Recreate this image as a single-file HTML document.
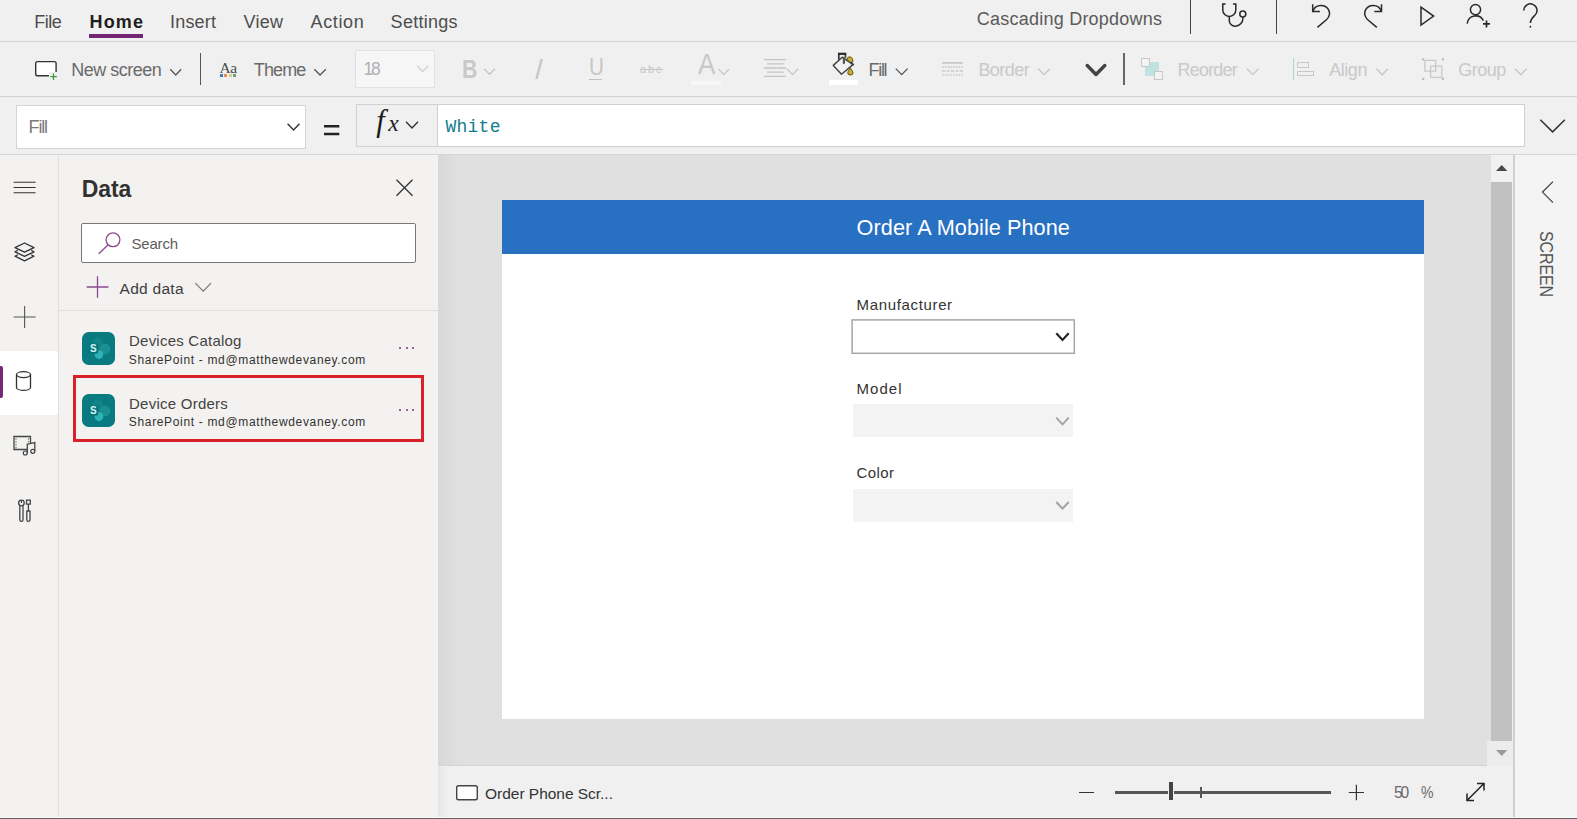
<!DOCTYPE html>
<html><head><meta charset="utf-8"><title>Cascading Dropdowns</title>
<style>
*{box-sizing:border-box;margin:0;padding:0}
html,body{width:1577px;height:819px;overflow:hidden;background:#f0f0f0;font-family:"Liberation Sans",sans-serif;}
.a{position:absolute;white-space:nowrap}
svg{position:absolute;overflow:visible}
#menubar{left:0;top:0;width:1577px;height:42px;background:#f0f0f0;border-bottom:1px solid #d2d2d2}
#toolbar{left:0;top:42px;width:1577px;height:55px;background:#f0f0f0;border-bottom:1px solid #d2d2d2}
#fbar{left:0;top:97px;width:1577px;height:58px;background:#f0f0f0;border-bottom:1px solid #d6d6d6}
.menu{top:10px;font-size:18px;color:#4a4a4a;line-height:22px}
.tb{top:59px;font-size:18px;color:#666;line-height:22px}
.dis{color:#c2c2c2}
#rail{left:0;top:155px;width:59px;height:662px;background:#f3f2f1;border-right:1px solid #e1dfdd}
#panel{left:59px;top:155px;width:379px;height:662px;background:#f3f2f1}
#canvas{left:438px;top:155px;width:1053px;height:610px;background:#e0e0e0}
#vscroll{left:1491px;top:155px;width:21.3px;height:610px;background:#c1c1c1}
#right{left:1512.6px;top:155px;width:64.4px;height:662px;background:#f4f4f4;border-left:2px solid #d0d0d0}
#bbar{left:438px;top:765px;width:1075px;height:52px;background:#f0f0f0;border-top:1px solid #d4d4d4}
#bottomline{left:0;top:817px;width:1577px;height:2px;background:#606060;border-top:1px solid #fafafa}
</style></head><body>
<div class="a" id="menubar"></div>
<div class="a" id="toolbar"></div>
<div class="a" id="fbar"></div>
<div class="a" id="rail"></div>
<div class="a" id="panel"></div>
<div class="a" id="canvas"></div>
<div class="a" id="vscroll"></div>
<div class="a" id="right"></div>
<div class="a" id="bbar"></div>
<div class="a" id="bottomline"></div>

<div class="a" style="left:354.5px;top:49.5px;width:80px;height:38.5px;background:#f6f6f6;border:1px solid #e2e2e2"></div>
<div class="a" style="left:691px;top:80.5px;width:30px;height:4px;background:#f8f8f8"></div>
<div class="a" style="left:829px;top:80px;width:29px;height:5px;background:#fff"></div>
<div class="a" style="left:16px;top:104.5px;width:290px;height:44px;background:#fff;border:1px solid #d4d4d4"></div>
<div class="a" style="left:356px;top:104px;width:81.5px;height:43px;background:#f0f0f0;border:1px solid #d0d0d0"></div>
<div class="a" style="left:437px;top:104px;width:1088px;height:43px;background:#fff;border:1px solid #d0d0d0"></div>
<div class="a" style="left:0;top:350.5px;width:57.5px;height:64px;background:#fff;border-radius:0 3px 3px 0"></div>
<div class="a" style="left:0;top:365.5px;width:3px;height:32.5px;background:#742774;border-radius:0 2px 2px 0"></div>
<div class="a" style="left:81px;top:223px;width:335.3px;height:40px;background:#fff;border:1px solid #7a7876;border-radius:2px"></div>
<div class="a" style="left:59px;top:310px;width:379px;height:1px;background:#e1dfdd"></div>
<div class="a" style="left:73px;top:375px;width:351px;height:67px;border:3px solid #d9212b"></div>
<div class="a" style="left:438px;top:155px;width:22px;height:610px;background:linear-gradient(90deg,#d8d8d8,#e0e0e0)"></div>
<div class="a" style="left:502px;top:200px;width:922px;height:519px;background:#fff"></div>
<div class="a" style="left:502px;top:200px;width:922px;height:54px;background:#2870c2"></div>
<svg class="a" style="left:0;top:0" width="1" height="1"><rect x="852.1" y="319.9" width="222.2" height="33.4" fill="#fff" stroke="#a6a6a6" stroke-width="1.5"/></svg>
<div class="a" style="left:852.7px;top:404px;width:220.3px;height:33px;background:#f3f3f3"></div>
<div class="a" style="left:852.7px;top:489px;width:220.3px;height:33px;background:#f3f3f3"></div>
<div class="a" style="left:1491px;top:155px;width:22px;height:27px;background:#f1f1f1"></div>
<div class="a" style="left:1487px;top:741px;width:26px;height:25px;background:#ececec"></div>
<svg class="a" style="left:0;top:0" width="1" height="1"><rect x="456.7" y="785.7" width="20.6" height="14" rx="1.8" fill="#fff" stroke="#444" stroke-width="1.4"/></svg>

<div class="a" style="left:34.3px;top:12.8px;font:normal 400 18px/18px 'Liberation Sans',sans-serif;color:#4d4d4d;letter-spacing:-0.54px;">File</div>
<div class="a" style="left:89.6px;top:12.8px;font:normal 700 18px/18px 'Liberation Sans',sans-serif;color:#1f1f1f;letter-spacing:1.13px;">Home</div>
<div class="a" style="left:170.0px;top:12.8px;font:normal 400 18px/18px 'Liberation Sans',sans-serif;color:#4d4d4d;letter-spacing:0.19px;">Insert</div>
<div class="a" style="left:243.6px;top:12.8px;font:normal 400 18px/18px 'Liberation Sans',sans-serif;color:#4d4d4d;letter-spacing:0.23px;">View</div>
<div class="a" style="left:310.6px;top:12.8px;font:normal 400 18px/18px 'Liberation Sans',sans-serif;color:#4d4d4d;letter-spacing:0.61px;">Action</div>
<div class="a" style="left:390.6px;top:12.8px;font:normal 400 18px/18px 'Liberation Sans',sans-serif;color:#4d4d4d;letter-spacing:0.28px;">Settings</div>
<div class="a" style="left:976.7px;top:9.5px;font:normal 400 18px/18px 'Liberation Sans',sans-serif;color:#5a5a5a;letter-spacing:0.24px;">Cascading Dropdowns</div>
<div class="a" style="left:71.3px;top:60.9px;font:normal 400 18px/18px 'Liberation Sans',sans-serif;color:#6a6a6a;letter-spacing:-0.52px;">New screen</div>
<div class="a" style="left:253.8px;top:60.9px;font:normal 400 18px/18px 'Liberation Sans',sans-serif;color:#6a6a6a;letter-spacing:-0.88px;">Theme</div>
<div class="a" style="left:363.5px;top:61.3px;font:normal 400 17.5px/17.5px 'Liberation Sans',sans-serif;color:#b0b0b0;letter-spacing:-2.27px;">18</div>
<div class="a" style="left:462.0px;top:56.0px;font:normal 700 26px/26px 'Liberation Sans',sans-serif;color:#c9c9c9;letter-spacing:-3.78px;transform:scaleX(0.82);transform-origin:0 0">B</div>
<div class="a" style="left:535.3px;top:57.4px;font:normal 400 27px/27px 'Liberation Sans',sans-serif;color:#c4c4c4;letter-spacing:1.18px;">/</div>
<div class="a" style="left:589.0px;top:55.4px;font:normal 400 24px/24px 'Liberation Sans',sans-serif;color:#c6c6c6;letter-spacing:-4.04px;transform:scaleX(0.86);transform-origin:0 0">U</div>
<div class="a" style="left:640.0px;top:64.0px;font:normal 400 11px/11px 'Liberation Sans',sans-serif;color:#c6c6c6;letter-spacing:1.82px;text-decoration:line-through">abc</div>
<div class="a" style="left:697.5px;top:49.8px;font:normal 400 29px/29px 'Liberation Sans',sans-serif;color:#c8c8c8;letter-spacing:-2.14px;transform:scaleX(0.9);transform-origin:0 0">A</div>
<div class="a" style="left:868.5px;top:60.9px;font:normal 400 18px/18px 'Liberation Sans',sans-serif;color:#6a6a6a;letter-spacing:-1.30px;">Fill</div>
<div class="a" style="left:978.4px;top:60.9px;font:normal 400 18px/18px 'Liberation Sans',sans-serif;color:#c9c9c9;letter-spacing:-0.55px;">Border</div>
<div class="a" style="left:1177.4px;top:60.9px;font:normal 400 18px/18px 'Liberation Sans',sans-serif;color:#c9c9c9;letter-spacing:-0.76px;">Reorder</div>
<div class="a" style="left:1329.3px;top:60.9px;font:normal 400 18px/18px 'Liberation Sans',sans-serif;color:#c9c9c9;letter-spacing:-0.48px;">Align</div>
<div class="a" style="left:1458.2px;top:60.9px;font:normal 400 18px/18px 'Liberation Sans',sans-serif;color:#c9c9c9;letter-spacing:-0.46px;">Group</div>
<div class="a" style="left:28.6px;top:118.0px;font:normal 400 18px/18px 'Liberation Sans',sans-serif;color:#7a7a7a;letter-spacing:-1.17px;">Fill</div>
<div class="a" style="left:445.4px;top:118.0px;font:normal 400 18px/18px 'Liberation Mono',monospace;color:#12808c;letter-spacing:0.27px;">White</div>
<div class="a" style="left:376.2px;top:106.1px;font:italic 400 30.5px/30.5px 'Liberation Serif',serif;color:#1a1a1a;letter-spacing:1.32px;">f</div>
<div class="a" style="left:388.3px;top:111.9px;font:italic 400 23.5px/23.5px 'Liberation Serif',serif;color:#1a1a1a;letter-spacing:0.26px;">x</div>
<div class="a" style="left:81.8px;top:177.9px;font:normal 700 23px/23px 'Liberation Sans',sans-serif;color:#323130;letter-spacing:-0.09px;">Data</div>
<div class="a" style="left:131.4px;top:236.2px;font:normal 400 15px/15px 'Liberation Sans',sans-serif;color:#605e5c;letter-spacing:-0.17px;">Search</div>
<div class="a" style="left:119.5px;top:281.0px;font:normal 400 15.5px/15.5px 'Liberation Sans',sans-serif;color:#3e3d3b;letter-spacing:0.29px;">Add data</div>
<div class="a" style="left:129.0px;top:333.0px;font:normal 400 15px/15px 'Liberation Sans',sans-serif;color:#454341;letter-spacing:0.23px;">Devices Catalog</div>
<div class="a" style="left:128.8px;top:353.5px;font:normal 400 12px/12px 'Liberation Sans',sans-serif;color:#323130;letter-spacing:0.66px;">SharePoint - md@matthewdevaney.com</div>
<div class="a" style="left:129.0px;top:395.7px;font:normal 400 15px/15px 'Liberation Sans',sans-serif;color:#454341;letter-spacing:0.25px;">Device Orders</div>
<div class="a" style="left:128.8px;top:416.1px;font:normal 400 12px/12px 'Liberation Sans',sans-serif;color:#323130;letter-spacing:0.66px;">SharePoint - md@matthewdevaney.com</div>
<div class="a" style="left:856.6px;top:216.9px;font:normal 400 21.7px/21.7px 'Liberation Sans',sans-serif;color:#ffffff;letter-spacing:0.06px;">Order A Mobile Phone</div>
<div class="a" style="left:856.6px;top:297.3px;font:normal 400 15px/15px 'Liberation Sans',sans-serif;color:#333;letter-spacing:0.65px;">Manufacturer</div>
<div class="a" style="left:856.6px;top:381.3px;font:normal 400 15px/15px 'Liberation Sans',sans-serif;color:#333;letter-spacing:1.01px;">Model</div>
<div class="a" style="left:856.6px;top:465.3px;font:normal 400 15px/15px 'Liberation Sans',sans-serif;color:#333;letter-spacing:0.39px;">Color</div>
<div class="a" style="left:485.1px;top:785.9px;font:normal 400 15.5px/15.5px 'Liberation Sans',sans-serif;color:#333;letter-spacing:-0.03px;">Order Phone Scr...</div>
<div class="a" style="left:1394.0px;top:785.1px;font:normal 400 15.6px/15.6px 'Liberation Sans',sans-serif;color:#6a6a6a;letter-spacing:-2.16px;">50</div>
<div class="a" style="left:1420.8px;top:785.1px;font:normal 400 15.6px/15.6px 'Liberation Sans',sans-serif;color:#6a6a6a;letter-spacing:-1.88px;transform:scaleX(0.9);transform-origin:0 0">%</div>
<div class="a" style="left:219.4px;top:60.0px;font:normal 400 15.5px/15.5px 'Liberation Serif',serif;color:#4a4a4a;letter-spacing:-0.28px;">Aa</div>

<div class="a" style="left:89.3px;top:33.8px;width:53.7px;height:3.8px;background:#742774"></div>
<div class="a" style="left:1190px;top:0;width:1.2px;height:33.7px;background:#444"></div>
<div class="a" style="left:1276px;top:0;width:1.2px;height:33.7px;background:#444"></div>
<svg class="a" style="left:0;top:0" width="1" height="1" fill="none" stroke="#2a2a2a" stroke-width="1.5">
<!-- stethoscope -->
<path d="M1225.6 3.9 h-2.8 v6 a6.5 6.5 0 0 0 13 0 v-6 h-2.8"/>
<path d="M1229.3 16.4 v4 a5.7 5.7 0 0 0 5.7 5.8 h0.3 a7.8 7.8 0 0 0 7.6 -7.8 v-1.4"/>
<circle cx="1242.8" cy="13.9" r="3"/>
<!-- undo -->
<path d="M1312.7 4.2 v7.2 h7.2"/>
<path d="M1312.9 11.2 a8.6 8.6 0 0 1 16.5 0.8 c0.6 3.2 -0.8 5.6 -3 7.8 l-9 7.6"/>
<!-- redo -->
<path d="M1381.5 4.2 v7.2 h-7.2"/>
<path d="M1381.3 11.2 a8.6 8.6 0 0 0 -16.5 0.8 c-0.6 3.2 0.8 5.6 3 7.8 l9 7.6"/>
<!-- play -->
<path d="M1421 7.2 L1433.6 16.1 L1421 25 Z"/>
<!-- person+ -->
<circle cx="1475.5" cy="9.6" r="5.1"/>
<path d="M1467.2 23.6 a8.6 8.6 0 0 1 16.2 -3"/>
<path d="M1486.5 20.4 v7 M1483 23.9 h7" stroke-width="1.7"/>
<!-- ? -->
<path d="M1523.8 10.6 a6.6 6.6 0 1 1 11.2 4.6 c-2.6 2.6 -4.6 4.2 -4.6 7.8"/>
<path d="M1530.4 25.8 v1.8"/>
</svg>

<svg class="a" style="left:0;top:0" width="1" height="1"><rect x="35.700" y="61.600" width="20.400" height="14.200" rx="1.800" fill="#fff" stroke="#333" stroke-width="1.400"/></svg><div class="a" style="left:48.8px;top:72px;width:9px;height:9px;background:#f0f0f0"></div><svg class="a" style="left:0;top:0" width="1" height="1" fill="none" ><path d="M53.5 73.4v6.6M50.2 76.7h6.6" stroke="#3a9d3a" stroke-width="1.3"/></svg><svg class="a" style="left:0;top:0" width="1" height="1"><path d="M170.3 69.3L175.75 75L181.2 69.3" fill="none" stroke="#555" stroke-width="1.3"/></svg><div class="a" style="left:200.2px;top:53px;width:1.2px;height:31.6px;background:#555"></div><div class="a" style="left:219.6px;top:74px;width:3.2px;height:3px;background:#3f7cb8"></div><div class="a" style="left:224.1px;top:74px;width:3.2px;height:3px;background:#e0904f"></div><div class="a" style="left:228.6px;top:74px;width:3.2px;height:3px;background:#e4c48e"></div><div class="a" style="left:233.1px;top:74px;width:3.2px;height:3px;background:#62a283"></div><svg class="a" style="left:0;top:0" width="1" height="1"><path d="M314.3 69.3L320.05 75L325.8 69.3" fill="none" stroke="#555" stroke-width="1.3"/></svg><svg class="a" style="left:0;top:0" width="1" height="1"><path d="M417 65.6L422.7 71.5L428.4 65.6" fill="none" stroke="#d0d0d0" stroke-width="1.3"/></svg><svg class="a" style="left:0;top:0" width="1" height="1"><path d="M484 68.7L489.5 74.3L495 68.7" fill="none" stroke="#c6c6c6" stroke-width="1.3"/></svg><div class="a" style="left:589px;top:78.6px;width:13.3px;height:1.3px;background:#c0c0c0"></div><svg class="a" style="left:0;top:0" width="1" height="1"><path d="M718.5 69L723.75 74.6L729 69" fill="none" stroke="#c6c6c6" stroke-width="1.3"/></svg><svg class="a" style="left:0;top:0" width="1" height="1" fill="none" ><path d="M764 59.6h22M767 63.8h16.5M764 68h22M767 72.2h16.5M764 76.4h22" stroke="#c4c4c4" stroke-width="1.3"/></svg><svg class="a" style="left:0;top:0" width="1" height="1"><path d="M787 68.7L792.55 74.6L798.1 68.7" fill="none" stroke="#c6c6c6" stroke-width="1.3"/></svg><svg class="a" style="left:0;top:0" width="1" height="1" fill="none" ><ellipse cx="849.900" cy="60" rx="2.700" ry="3.100" fill="#c9b03c" stroke="#7d6c18" stroke-width="1.100" transform="rotate(-35 849.900 60)"/><path d="M850.400 68.200c-1.600 2.200-2.600 3.300-2.600 4.400a2.600 2.300 0 0 0 5.200 0c0-1.100-1-2.200-2.600-4.400z" fill="#c9b03c" stroke="#7d6c18" stroke-width="1.100"/><path d="M842.200 57.200l10.800 7.400-11.500 9.600-8.200-8.800z" stroke="#454545" stroke-width="1.450" fill="#f2f2f2" stroke-linejoin="round"/><path d="M838.800 59.800v-6h6.600v4" stroke="#333" stroke-width="1.700"/><path d="M838 53.700h8.200" stroke="#2a2a2a" stroke-width="2"/><path d="M843.900 58.400v4.600" stroke="#555" stroke-width="2.200" stroke-linecap="round"/><path d="M850.800 62l3 3" stroke="#3a3a3a" stroke-width="1.400"/></svg><svg class="a" style="left:0;top:0" width="1" height="1"><path d="M895.8 68.6L901.7 74.6L907.6 68.6" fill="none" stroke="#555" stroke-width="1.3"/></svg><svg class="a" style="left:0;top:0" width="1" height="1" fill="none" ><path d="M942.2 62.900h20.600" stroke="#c8c8c8" stroke-width="1.800"/><path d="M942.2 67h20.600M942.2 75h20.600" stroke="#c8c8c8" stroke-width="1.500" stroke-dasharray="1.600 1.100"/><path d="M942.2 71.100h20.600" stroke="#c8c8c8" stroke-width="1.500" stroke-dasharray="3 1.400"/></svg><svg class="a" style="left:0;top:0" width="1" height="1"><path d="M1038.3 68.7L1044.15 74.6L1050 68.7" fill="none" stroke="#c6c6c6" stroke-width="1.3"/></svg><svg class="a" style="left:0;top:0" width="1" height="1" fill="none" ><path d="M1087.200 65.500l8.800 9 8.800-9" stroke="#444" stroke-width="3.400" stroke-linecap="round" stroke-linejoin="round"/></svg><div class="a" style="left:1123px;top:53px;width:1.700px;height:31.800px;background:#666"></div><div class="a" style="left:1145.200px;top:62.200px;width:13.500px;height:13.500px;background:#bfe3e3"></div><div class="a" style="left:1141.300px;top:58.300px;width:9px;height:9px;background:#f3f3f3;border:1.300px solid #c8c8c8"></div><div class="a" style="left:1153.800px;top:70.800px;width:9px;height:9px;background:#f3f3f3;border:1.300px solid #c8c8c8"></div><svg class="a" style="left:0;top:0" width="1" height="1"><path d="M1246.8 68.7L1252.65 74.6L1258.5 68.7" fill="none" stroke="#c6c6c6" stroke-width="1.3"/></svg><div class="a" style="left:1293px;top:57.900px;width:1.200px;height:22px;background:#a6d6d6"></div><div class="a" style="left:1297.300px;top:62.300px;width:12px;height:5.500px;border:1.300px solid #c8c8c8"></div><div class="a" style="left:1297.300px;top:70.600px;width:16.500px;height:5.500px;border:1.300px solid #c8c8c8"></div><svg class="a" style="left:0;top:0" width="1" height="1"><path d="M1376.5 68.7L1382.25 74.8L1388 68.7" fill="none" stroke="#c6c6c6" stroke-width="1.3"/></svg><svg class="a" style="left:0;top:0" width="1" height="1" fill="none" ><path d="M1422.100 58.200h2.200v2.200h-2.200zM1441.800 58.200h2.200v2.200h-2.200zM1422.100 77.800h2.200v2.200h-2.200zM1441.800 77.800h2.200v2.200h-2.200z" fill="#bdbdbd"/><path d="M1424.900 60.400h10.800v10.800h-10.800zM1430.600 66.200h11.200v11.200h-11.200z" stroke="#c8c8c8" stroke-width="1.300"/></svg><svg class="a" style="left:0;top:0" width="1" height="1"><path d="M1515 68.7L1520.75 74.8L1526.5 68.7" fill="none" stroke="#c6c6c6" stroke-width="1.3"/></svg>
<svg class="a" style="left:0;top:0" width="1" height="1"><path d="M287.6 123.8L293.55 130L299.5 123.8" fill="none" stroke="#333" stroke-width="1.4"/></svg><svg class="a" style="left:0;top:0" width="1" height="1" fill="none" ><path d="M324 126.300h15.300M324 134h15.300" stroke="#222" stroke-width="2.500"/></svg><svg class="a" style="left:0;top:0" width="1" height="1"><path d="M406 121.8L412.0 128L418 121.8" fill="none" stroke="#333" stroke-width="1.4"/></svg><svg class="a" style="left:0;top:0" width="1" height="1"><path d="M1540.3 119.8L1552.6 131.9L1564.9 119.8" fill="none" stroke="#333" stroke-width="1.5"/></svg>
<svg class="a" style="left:0;top:0" width="1" height="1" fill="none" ><path d="M13.600 182.300h22M13.600 187.500h22M13.600 192.700h22" stroke="#333" stroke-width="1.100"/><path d="M24.500 243l9.500 4.600-9.500 4.600-9.500-4.600z" stroke="#333" stroke-width="1.300" stroke-linejoin="round"/><path d="M17.800 250.300l-2.800 1.500 9.500 4.600 9.500-4.600-2.800-1.500M17.800 254.700l-2.800 1.500 9.500 4.600 9.500-4.600-2.800-1.500" stroke="#333" stroke-width="1.300" stroke-linejoin="round"/><path d="M24.600 306v22M13.600 317h22" stroke="#555" stroke-width="1.100"/><ellipse cx="23.500" cy="374.600" rx="7" ry="3" stroke="#333" stroke-width="1.300"/><path d="M16.500 374.600v12.800a7 3 0 0 0 14 0v-12.800" stroke="#333" stroke-width="1.300"/><path d="M27.500 449.500h-13.500v-13h16.500v6.500" stroke="#444" stroke-width="1.300"/><path d="M16 438.500v1M16 441.500v1M16 444.500v1M16 447.200v1M28.500 438.500v1M28.500 441.200v1" stroke="#444" stroke-width="1.200"/><path d="M27.300 452.800v-8.600l7.500-1.700v8.600" stroke="#444" stroke-width="1.300"/><circle cx="25.300" cy="453" r="2" stroke="#444" stroke-width="1.200"/><circle cx="32.800" cy="451.300" r="2" stroke="#444" stroke-width="1.200"/><path d="M19.800 505.500v14.200a1.600 1.600 0 0 0 3.200 0v-14.200" stroke="#444" stroke-width="1.300"/><circle cx="21.400" cy="503" r="2.800" stroke="#444" stroke-width="1.300"/><path d="M21.400 500v3" stroke="#444" stroke-width="1.200"/><path d="M26.500 500.200h3.800v4h-3.800zM28.400 504.200v6.800M26.300 511h4.200M26.800 511v8.700a1.600 1.600 0 0 0 3.200 0v-8.700" stroke="#444" stroke-width="1.300"/></svg>
<svg class="a" style="left:0;top:0" width="1" height="1" fill="none" ><path d="M396.500 179.700l16 16M412.500 179.700l-16 16" stroke="#333" stroke-width="1.300"/></svg><svg class="a" style="left:0;top:0" width="1" height="1" fill="none" ><circle cx="113" cy="239.800" r="6.900" stroke="#8c4a8e" stroke-width="1.300"/><path d="M108.200 244.800l-9.500 9" stroke="#8c4a8e" stroke-width="1.300"/></svg><svg class="a" style="left:0;top:0" width="1" height="1" fill="none" ><path d="M97.500 276.300v21.500M86.700 287h21.700" stroke="#8c4a8e" stroke-width="1.300"/></svg><svg class="a" style="left:0;top:0" width="1" height="1"><path d="M195.4 283.2L203.2 291.2L211 283.2" fill="none" stroke="#777" stroke-width="1.2"/></svg><svg class="a" style="left:82px;top:332px" width="33" height="33" viewBox="0 0 33 33"><rect width="33" height="33" rx="6.800" fill="#097a7f"/><circle cx="15.700" cy="10.900" r="5.600" fill="#0f8588"/><circle cx="23" cy="17" r="5.400" fill="#1a9093"/><circle cx="17" cy="22.600" r="4.300" fill="#2db2b7"/><rect x="6.300" y="11.400" width="9.800" height="10.200" rx="0.800" fill="#0a7578"/><text x="11.300" y="19.900" font-family="Liberation Sans,sans-serif" font-size="10" font-weight="700" fill="#d4f5f5" text-anchor="middle">S</text></svg><svg class="a" style="left:82px;top:394px" width="33" height="33" viewBox="0 0 33 33"><rect width="33" height="33" rx="6.800" fill="#097a7f"/><circle cx="15.700" cy="10.900" r="5.600" fill="#0f8588"/><circle cx="23" cy="17" r="5.400" fill="#1a9093"/><circle cx="17" cy="22.600" r="4.300" fill="#2db2b7"/><rect x="6.300" y="11.400" width="9.800" height="10.200" rx="0.800" fill="#0a7578"/><text x="11.300" y="19.900" font-family="Liberation Sans,sans-serif" font-size="10" font-weight="700" fill="#d4f5f5" text-anchor="middle">S</text></svg><div class="a" style="left:399.4px;top:346.9px;width:2px;height:2px;background:#96649a"></div><div class="a" style="left:405.5px;top:346.9px;width:2px;height:2px;background:#96649a"></div><div class="a" style="left:411.6px;top:346.9px;width:2px;height:2px;background:#96649a"></div><div class="a" style="left:399.4px;top:408.7px;width:2px;height:2px;background:#96649a"></div><div class="a" style="left:405.5px;top:408.7px;width:2px;height:2px;background:#96649a"></div><div class="a" style="left:411.6px;top:408.7px;width:2px;height:2px;background:#96649a"></div>
<svg class="a" style="left:0;top:0" width="1" height="1"><path d="M1056.3 333.3L1062.5 340L1068.7 333.3" fill="none" stroke="#222" stroke-width="2.1"/></svg><svg class="a" style="left:0;top:0" width="1" height="1"><path d="M1056.3 417.6L1062.5 424.3L1068.7 417.6" fill="none" stroke="#a2a2a2" stroke-width="1.9"/></svg><svg class="a" style="left:0;top:0" width="1" height="1"><path d="M1056.3 502L1062.5 508.7L1068.7 502" fill="none" stroke="#a2a2a2" stroke-width="1.9"/></svg><svg class="a" style="left:0;top:0" width="1" height="1" fill="none" ><path d="M1496 171l5.700-6 5.700 6z" fill="#484848"/><path d="M1496 750l5.700 6 5.700-6z" fill="#999"/></svg>
<svg class="a" style="left:0;top:0" width="1" height="1" fill="none" ><path d="M1553 181.600l-10.500 10.500 10.500 10.500" stroke="#444" stroke-width="1.300"/></svg><div class="a" style="left:1546px;top:264.200px;font:400 16px/16px 'Liberation Sans',sans-serif;color:#555;letter-spacing:-0.1px;transform:translate(-50%,-50%) rotate(90deg) scaleY(1.14)">SCREEN</div>
<div class="a" style="left:438px;top:766px;width:10px;height:51px;background:linear-gradient(90deg,#e6e6e6,#f0f0f0)"></div><div class="a" style="left:1079px;top:791.800px;width:15.400px;height:1.200px;background:#333"></div><div class="a" style="left:1114.800px;top:790.700px;width:216.500px;height:3.300px;background:#555"></div><div class="a" style="left:1167.600px;top:782.100px;width:6.800px;height:18.200px;background:#f0f0f0"></div><div class="a" style="left:1168.900px;top:782.100px;width:4.300px;height:18.200px;background:#444"></div><div class="a" style="left:1200px;top:787px;width:1.800px;height:11px;background:#555"></div><svg class="a" style="left:0;top:0" width="1" height="1" fill="none" ><path d="M1356.400 784.800v15.400M1348.800 792.500h15.200" stroke="#333" stroke-width="1.200"/></svg><svg class="a" style="left:0;top:0" width="1" height="1" fill="none" ><path d="M1467.500 800l16-16M1467 793.500v7h7M1477 783.500h7v7" stroke="#222" stroke-width="1.500"/></svg>
</body></html>
